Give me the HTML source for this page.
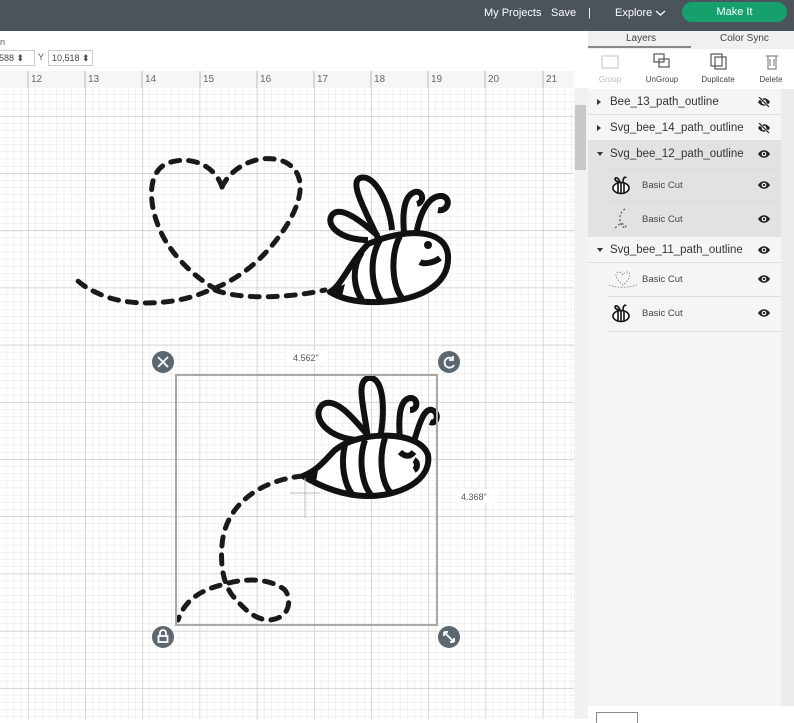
<!DOCTYPE html>
<html><head><style>
body{margin:0;width:794px;height:719px;overflow:hidden;font-family:"Liberation Sans",sans-serif;background:#fff;position:relative}
.hdr{position:absolute;left:0;top:0;width:794px;height:31px;background:#4b535b;color:#fff;font-size:11px}
.hdr span{position:absolute;top:7px}
.mk{position:absolute;left:682px;top:2px;width:105px;height:20px;border-radius:11px;background:#16a06c;color:#fff;text-align:center;line-height:20px;font-size:11px}
.panel{position:absolute;left:588px;top:31px;width:206px;height:688px;background:#fff}
.tab{position:absolute;top:2px;font-size:10px;color:#444}
.tool{position:absolute;top:44px;font-size:8px;color:#444;text-align:center;width:50px}
.row{position:absolute;left:0;width:193px;height:26px;font-size:11.5px;color:#333;border-bottom:1px solid #ddd;box-sizing:border-box}
.row .t{position:absolute;left:22px;top:7px}
.row .ar{position:absolute;left:9px;top:10px;width:0;height:0}
.sub{position:absolute;left:20px;width:173px;height:34px;border-top:1px solid #ddd;font-size:9.5px;color:#444}
.sub .t{position:absolute;left:34px;top:11px}
.eye{position:absolute;right:10px;top:8px}
</style></head><body>
<svg width="0" height="0" style="position:absolute"><defs>
<g id="ey"><path d="M1 5 C4 0 10 0 13 5 C10 10 4 10 1 5Z" fill="#222"/><circle cx="7" cy="5" r="2.3" fill="#fff"/><circle cx="7" cy="5" r="1.2" fill="#222"/></g>
<g id="eyx"><use href="#ey"/><path d="M2 0L12 10" stroke="#f4f5f6" stroke-width="2.5"/><path d="M2 0L12 10" stroke="#222" stroke-width="1.2"/></g>
<g id="bee" fill="none" stroke="#111" stroke-width="1.6"><ellipse cx="10" cy="13" rx="8" ry="5.5" fill="#fff"/><path d="M7 8v10M10 7.5v11M13 8v10"/><path d="M9 7C7 2 4 2 4 4s3 3 5 3M12 7C12 3 14 1 15 3"/></g>
</defs></svg>
<div class="hdr"><span style="left:484px">My Projects</span><span style="left:551px">Save</span><span style="left:588px">|</span><span style="left:615px">Explore</span>
<svg style="position:absolute;left:655px;top:9px" width="11" height="8"><path d="M1 2 L5.5 6 L10 2" stroke="#fff" fill="none" stroke-width="1.3"/></svg>
<div class="mk">Make It</div></div>
<div style="position:absolute;left:0;top:37px;font-size:9px;color:#555">n</div>
<div style="position:absolute;left:-6px;top:50px;width:35px;height:14px;border:1px solid #ccc;font-size:9px;color:#444;line-height:14px;padding-left:4px;box-sizing:content-box">588 ⬍</div>
<div style="position:absolute;left:38px;top:52px;font-size:9px;color:#555">Y</div>
<div style="position:absolute;left:48px;top:50px;width:40px;height:14px;border:1px solid #ccc;font-size:9px;color:#444;line-height:14px;padding-left:3px">10,518 ⬍</div>
<svg style="position:absolute;left:0;top:71px" width="574" height="648">
<defs>
<pattern id="mn" width="7.15" height="7.15" patternUnits="userSpaceOnUse" x="28" y="2"><path d="M0 0H7.15M0 0V7.15" stroke="#e3e3e3" stroke-width="1" fill="none"/></pattern>
<pattern id="mj" width="57.2" height="57.2" patternUnits="userSpaceOnUse" x="28" y="45"><path d="M0 0H57.2M0 0V57.2" stroke="#c4c4c4" stroke-width="1.2" fill="none"/></pattern>
</defs>
<rect y="17" width="574" height="631" fill="#fff"/>
<rect y="17" width="574" height="631" fill="url(#mn)"/>
<rect y="17" width="574" height="631" fill="url(#mj)"/>
<rect width="574" height="17" fill="#f6f6f6"/>
<g stroke="#bbb" stroke-width="1">
<path d="M28 0V17M85 0V17M142 0V17M200 0V17M257 0V17M314 0V17M371 0V17M428 0V17M485 0V17M543 0V17"/>
</g>
<g font-size="10" fill="#666"><text x="31" y="11">12</text><text x="88" y="11">13</text><text x="145" y="11">14</text><text x="203" y="11">15</text><text x="260" y="11">16</text><text x="317" y="11">17</text><text x="374" y="11">18</text><text x="431" y="11">19</text><text x="488" y="11">20</text><text x="546" y="11">21</text></g>
<g transform="translate(0,-71)">
<g fill="none" stroke="#1a1a1a" stroke-width="5" stroke-linecap="round" stroke-dasharray="9 9">
<path d="M222 187 C215 165 190 155 168 163 C145 172 148 210 165 240 C180 265 205 285 222 292"/>
<path d="M222 187 C232 165 262 152 285 162 C310 175 300 205 285 228 C265 258 240 280 205 292 C180 303 140 307 110 298 C95 293 82 286 75 278"/>
<path d="M215 290 C240 300 290 298 325 290"/>
<path d="M303 476 C260 480 225 505 222 545 C220 570 225 585 232 595 C245 610 255 620 270 620 C290 618 292 600 285 590 C270 578 245 578 225 584 C200 590 185 600 178 620"/>
</g>
<g fill="none" stroke="#111" stroke-width="6" stroke-linejoin="round">
<path d="M378 238 C362 205 350 182 360 178 C375 173 390 205 392 230"/>
<path d="M368 240 C340 240 325 225 332 215 C340 205 360 220 378 236"/>
<path d="M404 232 C402 210 405 195 415 192 C423 190 425 202 417 204"/>
<path d="M416 236 C420 210 430 195 442 196 C452 198 448 212 438 210"/>
<path d="M368 244 C405 228 445 228 448 255 C450 285 420 300 380 302 C355 303 340 298 330 292 C342 285 348 265 368 244 Z" fill="#fff"/>
<path d="M362 252 C350 270 355 290 362 300 M380 240 C368 260 372 290 382 302 M400 236 C390 255 392 285 402 298"/>
<path d="M420 262 C425 265 435 262 440 258"/>
</g>
<path d="M326 293 L345 284 L342 296 Z" fill="#111"/>
<circle cx="428" cy="245" r="4" fill="#111"/>
<g fill="none" stroke="#111" stroke-width="6" stroke-linejoin="round">
<path d="M368 440 C365 410 355 382 368 378 C385 375 385 415 380 438"/>
<path d="M360 440 C330 440 310 418 322 405 C335 395 355 420 370 438"/>
<path d="M400 440 C398 415 400 400 410 398 C418 397 419 410 410 410"/>
<path d="M413 445 C420 420 425 408 432 410 C440 413 437 425 430 422"/>
<path d="M335 450 C360 430 420 430 428 455 C432 480 400 497 365 496 C340 495 318 485 303 476 C318 470 325 460 335 450 Z" fill="#fff"/>
<path d="M345 445 C340 465 345 485 352 494 M365 440 C358 460 362 485 372 496 M385 438 C378 460 382 485 392 494"/>
<path d="M400 452 C405 457 410 457 414 452 M414 470 C418 468 418 462 414 460"/>
</g>
<path d="M300 477 L318 470 L316 482 Z" fill="#111"/>
<rect x="176" y="375" width="261" height="250" fill="none" stroke="#a8a8a8" stroke-width="2"/>
<path d="M290 493H320M305 478V518" stroke="#bbb" stroke-width="1"/>
<rect x="286" y="350" width="42" height="14" fill="#fff"/><text x="293" y="361" font-size="9" fill="#555">4.562"</text>
<rect x="457" y="489" width="38" height="14" fill="#fff"/><text x="461" y="500" font-size="9" fill="#555">4.368"</text>
<g fill="#5c6770"><circle cx="163" cy="362" r="11"/><circle cx="449" cy="362" r="11"/><circle cx="163" cy="637" r="11"/><circle cx="449" cy="637" r="11"/></g>
<g stroke="#fff" stroke-width="1.8" fill="none">
<path d="M158 357L168 367M168 357L158 367"/>
<path d="M453 359 A5 5 0 1 0 454 365 M453 356 V360 H449"/>
<rect x="158.5" y="636" width="9" height="6"/><path d="M160 636V633A3 3 0 0 1 166 633V636"/>
<path d="M444 632L454 642M444 632H448M444 632V636M454 642H450M454 642V638"/>
</g>
</g>
</svg>
<div style="position:absolute;left:574px;top:88px;width:14px;height:631px;background:#f1f1f1"></div>
<div style="position:absolute;left:575px;top:105px;width:11px;height:65px;background:#c8c8c8"></div>
<div class="panel">
<div style="position:absolute;left:0;top:0;width:206px;height:18px;background:#f0f0f0"></div>
<div class="tab" style="left:38px">Layers</div><div class="tab" style="left:132px">Color Sync</div>
<div style="position:absolute;left:0;top:15px;width:103px;height:2px;background:#888"></div>
<div style="position:absolute;left:0;top:18px;width:206px;height:40px;background:#fff"></div>
<svg style="position:absolute;left:0;top:21px" width="206" height="20" fill="none" stroke-width="1.2">
<rect x="14" y="4" width="16" height="12" stroke="#ccc"/>
<rect x="66" y="2" width="10" height="8" stroke="#555"/><rect x="71" y="7" width="10" height="8" stroke="#555"/>
<rect x="123" y="2" width="11" height="12" stroke="#555"/><rect x="127" y="5" width="11" height="12" stroke="#555"/>
<path d="M178 4h12M180 4v13h8V4M182 7v7M186 7v7" stroke="#888"/>
</svg>
<div class="tool" style="left:-3px;color:#bbb">Group</div><div class="tool" style="left:49px">UnGroup</div><div class="tool" style="left:105px">Duplicate</div><div class="tool" style="left:158px">Delete</div>
<div style="position:absolute;left:0;top:58px;width:193px;height:617px;background:#f4f5f6"></div>
<div style="position:absolute;left:193px;top:58px;width:13px;height:617px;background:#ececec"></div>
<div class="row" style="top:58px"><span class="ar" style="border-left:4px solid #333;border-top:3px solid transparent;border-bottom:3px solid transparent"></span><span class="t">Bee_13_path_outline</span><svg class="eye" width="14" height="11"><use href="#eyx"/></svg></div>
<div class="row" style="top:84px"><span class="ar" style="border-left:4px solid #333;border-top:3px solid transparent;border-bottom:3px solid transparent"></span><span class="t">Svg_bee_14_path_outline</span><svg class="eye" width="14" height="11"><use href="#eyx"/></svg></div>
<div class="row" style="top:110px;background:#e2e2e2;border:none"><span class="ar" style="border-top:4px solid #333;border-left:3px solid transparent;border-right:3px solid transparent;top:11px"></span><span class="t">Svg_bee_12_path_outline</span><svg class="eye" width="14" height="11"><use href="#ey"/></svg></div>
<div style="position:absolute;left:0;top:136px;width:193px;height:70px;background:#e2e2e2"></div>
<div class="sub" style="top:137px"><svg style="position:absolute;left:3px;top:6px" width="22" height="22"><use href="#bee"/></svg><span class="t">Basic Cut</span><svg class="eye" style="top:11px" width="14" height="11"><use href="#ey"/></svg></div>
<div class="sub" style="top:171px"><svg style="position:absolute;left:3px;top:4px" width="22" height="26"><path d="M14 2C8 6 8 12 10 17C12 22 17 22 14 18C10 15 6 18 3 23" fill="none" stroke="#555" stroke-width="1.2" stroke-dasharray="2 2"/></svg><span class="t">Basic Cut</span><svg class="eye" style="top:11px" width="14" height="11"><use href="#ey"/></svg></div>
<div class="row" style="top:206px"><span class="ar" style="border-top:4px solid #333;border-left:3px solid transparent;border-right:3px solid transparent;top:11px"></span><span class="t">Svg_bee_11_path_outline</span><svg class="eye" width="14" height="11"><use href="#ey"/></svg></div>
<div class="sub" style="top:231px"><svg style="position:absolute;left:0;top:6px" width="30" height="22"><path d="M15 6C13 2 8 2 8 6C8 10 13 14 15 16C17 14 22 10 22 6C22 2 17 2 15 6M1 16C8 19 20 19 29 16" fill="none" stroke="#888" stroke-width="0.9" stroke-dasharray="1.5 1.5"/></svg><span class="t">Basic Cut</span><svg class="eye" style="top:11px" width="14" height="11"><use href="#ey"/></svg></div>
<div class="sub" style="top:265px;border-bottom:1px solid #ddd"><svg style="position:absolute;left:3px;top:6px" width="22" height="22"><use href="#bee"/></svg><span class="t">Basic Cut</span><svg class="eye" style="top:11px" width="14" height="11"><use href="#ey"/></svg></div>
<div style="position:absolute;left:8px;top:681px;width:40px;height:10px;border:1px solid #888;border-bottom:none;background:#fff"></div>
</div>
</body></html>
